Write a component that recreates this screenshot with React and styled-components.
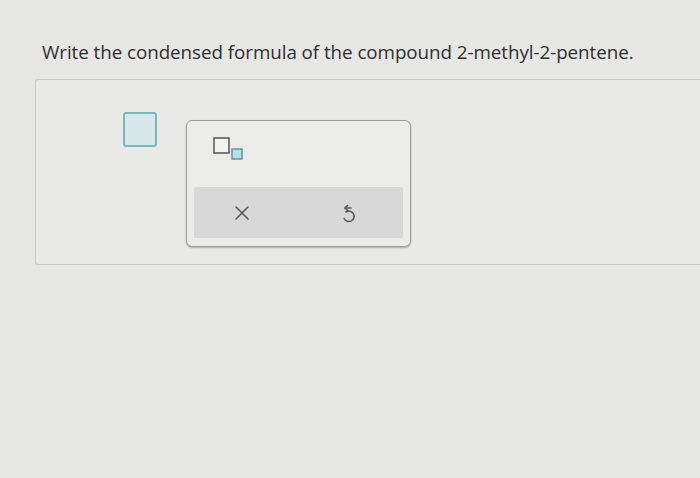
import React from 'react';
import styled, { createGlobalStyle } from 'styled-components';

const Global = createGlobalStyle`
  html, body {
    margin: 0;
    padding: 0;
    background: #e6e6e4;
  }
  body {
    font-family: "Open Sans", "Noto Sans", sans-serif;
    color: #333;
  }
`;

const Page = styled.div`
  width: 700px;
  height: 478px;
  overflow: hidden;
  padding: 40px 0 0 35px;
  box-sizing: border-box;
`;

const Question = styled.p`
  margin: 0 0 0 7px;
  font-size: 18.8px;
  line-height: 24px;
  letter-spacing: -0.05px;
  color: #2f2f2f;
`;

const AnswerArea = styled.div`
  margin-top: 15px;
  width: 700px;
  height: 186px;
  border: 1px solid #c9c9c7;
  border-right: none;
  border-radius: 3px 0 0 3px;
  background: #e9e9e7;
  display: flex;
  align-items: flex-start;
  padding: 32px 0 0 87px;
  box-sizing: border-box;
`;

const InputBox = styled.div`
  width: 30px;
  height: 31px;
  border: 2px solid #79b8bc;
  border-radius: 3px;
  background: #d7e6e6;
  flex-shrink: 0;
`;

const Palette = styled.div`
  margin: 8px 0 0 29px;
  width: 225px;
  height: 127px;
  border: 1px solid #9a9a9a;
  border-radius: 6px;
  background: #ebebe9;
  box-shadow: 0 1px 2px rgba(0, 0, 0, 0.25);
  padding: 16px 7px 8px 7px;
  box-sizing: border-box;
  display: flex;
  flex-direction: column;
`;

const ToolRow = styled.div`
  height: 50px;
  padding-left: 19px;
  display: flex;
  align-items: flex-start;
`;

const ActionBar = styled.div`
  height: 51px;
  background: #d6d7d6;
  border-radius: 2px;
  display: grid;
  grid-template-columns: 1fr 1fr;
  align-items: center;
  justify-items: center;
`;

const IconButton = styled.button`
  border: none;
  background: none;
  padding: 0;
  display: flex;
  color: #55595e;
  cursor: pointer;
  transform: translate(${p => p.shift || 0}px, ${p => p.drop || 0}px);
`;

const SubscriptIcon = () => (
  <svg width="32" height="24" viewBox="0 0 32 24">
    <rect x="1" y="1" width="15" height="15" fill="#f2f2f0" stroke="#555" strokeWidth="1.5" />
    <rect x="19" y="12" width="10" height="10" fill="#bcdcdf" stroke="#4d9ea4" strokeWidth="1.5" />
  </svg>
);

const CloseIcon = () => (
  <svg width="16" height="16" viewBox="0 0 16 16" fill="none" stroke="currentColor" strokeWidth="1.6" strokeLinecap="round">
    <path d="M2 2 L14 14 M14 2 L2 14" />
  </svg>
);

const UndoIcon = () => (
  <svg width="16" height="20" viewBox="0 0 16 20" fill="none" stroke="currentColor" strokeWidth="1.6" strokeLinecap="round" strokeLinejoin="round">
    <path d="M4 4 H10" />
    <path d="M6.5 1.5 L4 4 L6.5 6.5" />
    <path d="M5 8 A5.2 5.2 0 1 1 3.2 14.5" />
  </svg>
);

export default function App() {
  return (
    <>
      <Global />
      <Page>
        <Question>Write the condensed formula of the compound 2-methyl-2-pentene.</Question>
        <AnswerArea>
          <InputBox />
          <Palette>
            <ToolRow>
              <SubscriptIcon />
            </ToolRow>
            <ActionBar>
              <IconButton shift={-4} aria-label="clear"><CloseIcon /></IconButton>
              <IconButton shift={-2} drop={1} aria-label="undo"><UndoIcon /></IconButton>
            </ActionBar>
          </Palette>
        </AnswerArea>
      </Page>
    </>
  );
}
